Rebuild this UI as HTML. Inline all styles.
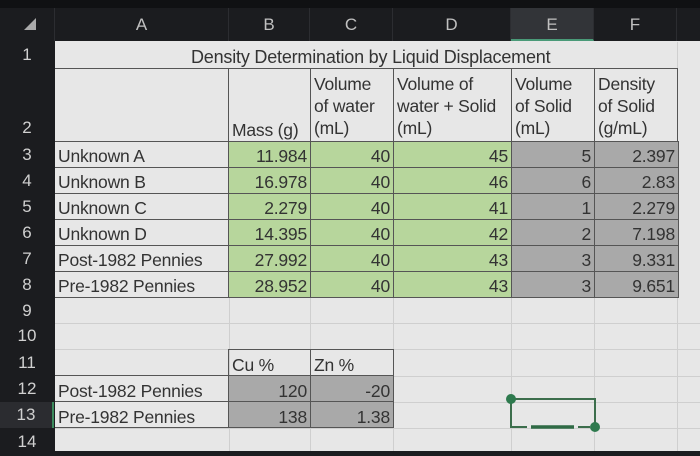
<!DOCTYPE html>
<html><head><meta charset="utf-8"><style>
body{margin:0;width:700px;height:451px;overflow:hidden;background:#1b1c1f;font-family:"Liberation Sans",sans-serif;position:relative}
.top{position:absolute;left:0;top:0;width:700px;height:8px;background:#101113}
.hdr{position:absolute;top:8px;height:33px;color:#c0c0c0;font-size:17px;text-align:center;line-height:33px;border-right:1px solid #2c2d31}
.rh{position:absolute;left:0;width:54px;color:#d0d0d0;font-size:17px;text-align:center}
.sheet{position:absolute;left:55px;top:41px;width:645px;height:410px;background:#e7e7e7}
.c{position:absolute;box-sizing:border-box;font-size:17.5px;color:#333;white-space:nowrap;padding:0 3px;overflow:hidden;letter-spacing:-0.2px}
.g{background:#b7d69c}
.x{background:#a9a9a9}
.r{text-align:right}
.vl{position:absolute;width:1px;background:#cfcfcf}
.hl{position:absolute;height:1px;background:#cfcfcf}
</style></head><body>
<div class="top"></div>
<div class="hdr" style="left:0;width:54px"><svg width="20" height="20" style="position:absolute;left:22px;top:8px"><polygon points="14,2 14,14 2,14" fill="#aaa"/></svg></div>
<div class="hdr" style="left:55px;width:173px">A</div>
<div class="hdr" style="left:229px;width:80px">B</div>
<div class="hdr" style="left:310px;width:82px">C</div>
<div class="hdr" style="left:393px;width:117px">D</div>
<div class="hdr" style="left:511px;width:82px;background:#323438;border-bottom:2px solid #4a9a78;height:31px">E</div>
<div class="hdr" style="left:594px;width:82px">F</div>

<div class="rh" style="top:42px;line-height:26px">1</div>
<div class="rh" style="top:68px;height:74px;line-height:120px">2</div>
<div class="rh" style="top:142px;line-height:26px">3</div>
<div class="rh" style="top:168px;line-height:26px">4</div>
<div class="rh" style="top:194px;line-height:26px">5</div>
<div class="rh" style="top:220px;line-height:26px">6</div>
<div class="rh" style="top:246px;line-height:26px">7</div>
<div class="rh" style="top:272px;line-height:26px">8</div>
<div class="rh" style="top:298px;line-height:25px">9</div>
<div class="rh" style="top:323px;line-height:26px">10</div>
<div class="rh" style="top:349px;line-height:27px">11</div>
<div class="rh" style="top:376px;line-height:26px">12</div>
<div class="rh" style="top:402px;line-height:26px;background:#2b2c30;border-right:2px solid #3b8a5c;width:52px">13</div>
<div class="rh" style="top:428px;line-height:28px">14</div>

<div class="sheet"></div>
<div class="vl" style="left:229px;top:298px;height:153px"></div>
<div class="vl" style="left:310px;top:298px;height:153px"></div>
<div class="vl" style="left:393px;top:298px;height:153px"></div>
<div class="vl" style="left:511px;top:298px;height:153px"></div>
<div class="vl" style="left:594px;top:298px;height:153px"></div>
<div class="vl" style="left:677px;top:42px;height:409px"></div>
<div class="hl" style="left:55px;top:323px;width:645px"></div>
<div class="hl" style="left:55px;top:349px;width:645px"></div>
<div class="hl" style="left:393px;top:376px;width:307px"></div>
<div class="hl" style="left:393px;top:402px;width:307px"></div>
<div class="hl" style="left:55px;top:428px;width:645px"></div>

<div class="c" style="left:188px;top:42px;width:400px;height:26px;line-height:31px;font-size:18px">Density Determination by Liquid Displacement</div>
<div class="c" style="left:55px;top:68px;width:174px;height:74px;border:1px solid #555;border-left:none"></div>
<div class="c" style="left:228px;top:68px;width:83px;height:74px;border:1px solid #555;padding-top:51px;line-height:20px">Mass (g)</div>
<div class="c" style="left:310px;top:68px;width:84px;height:74px;border:1px solid #555;line-height:22px;padding-top:4px">Volume<br>of water<br>(mL)</div>
<div class="c" style="left:393px;top:68px;width:119px;height:74px;border:1px solid #555;line-height:22px;padding-top:4px">Volume of<br>water + Solid<br>(mL)</div>
<div class="c" style="left:511px;top:68px;width:84px;height:74px;border:1px solid #555;line-height:22px;padding-top:4px">Volume<br>of Solid<br>(mL)</div>
<div class="c" style="left:594px;top:68px;width:84px;height:74px;border:1px solid #555;line-height:22px;padding-top:4px">Density<br>of Solid<br>(g/mL)</div>

<div id="rows"></div>
<script>
var d=[["Unknown A","11.984","40","45","5","2.397"],["Unknown B","16.978","40","46","6","2.83"],["Unknown C","2.279","40","41","1","2.279"],["Unknown D","14.395","40","42","2","7.198"],["Post-1982 Pennies","27.992","40","43","3","9.331"],["Pre-1982 Pennies","28.952","40","43","3","9.651"]];
var L=[55,228,310,393,511,594,678],h="";
for(var i=0;i<6;i++){var t=141+i*26;for(var j=0;j<6;j++){var cls=j==0?"":(j<4?"g r":"x r");h+='<div class="c '+cls+'" style="left:'+L[j]+'px;top:'+t+'px;width:'+(L[j+1]-L[j]+1)+'px;height:27px;line-height:28px;border:1px solid #555;'+(j==0?'border-left:none;':'')+'">'+d[i][j]+'</div>';}}
var e=[["","Cu %","Zn %"],["Post-1982 Pennies","120","-20"],["Pre-1982 Pennies","138","1.38"]],T=[349,375,401];
for(var i=0;i<3;i++){for(var j=0;j<3;j++){var cls=(i>0&&j>0)?"x r":"";if(i==0&&j==0)continue;h+='<div class="c '+cls+'" style="left:'+L[j]+'px;top:'+T[i]+'px;width:'+(L[j+1]-L[j]+1)+'px;height:27px;line-height:30px;border:1px solid #555;'+(j==0?'border-left:none;':'')+'">'+e[i][j]+'</div>';}}
document.getElementById("rows").innerHTML=h;
</script>
<svg style="position:absolute;left:0;top:0" width="700" height="451">
<path d="M511 399 H595 V427" stroke="#3c6e4c" stroke-width="2" fill="none"/>
<path d="M511 399 V427 H527" stroke="#3c6e4c" stroke-width="2" fill="none"/>
<path d="M531 427 H574" stroke="#2f6a45" stroke-width="3.5" fill="none"/>
<path d="M578 427 H590" stroke="#3c6e4c" stroke-width="2" fill="none"/>
<circle cx="511" cy="399" r="5" fill="#2e7a4e"/>
<circle cx="595" cy="427" r="5" fill="#2e7a4e"/>
</svg>
</body></html>
